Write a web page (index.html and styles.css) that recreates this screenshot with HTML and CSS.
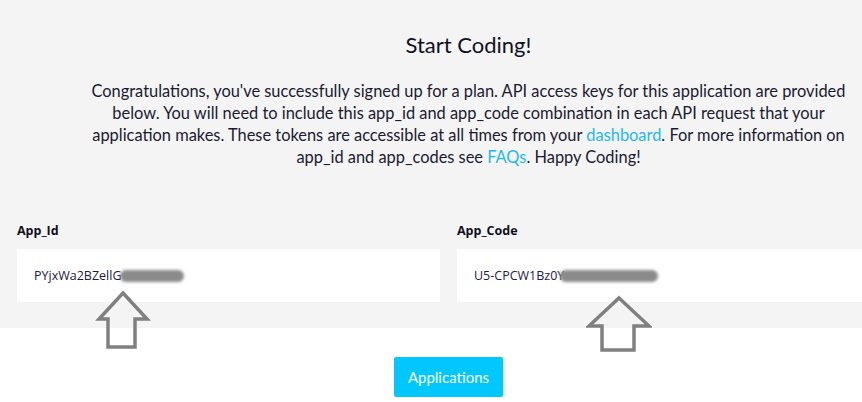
FILE: index.html
```html
<!DOCTYPE html>
<html>
<head>
<meta charset="utf-8">
<link rel="stylesheet" href="styles.css">
</head>
<body>
<div class="page">
  <section class="hero">
    <h1 class="title">Start Coding!</h1>
    <p class="intro">Congratulations, you've successfully signed up for a plan. API access keys for this application are provided below. You will need to include this app_id and app_code combination in each API request that your application makes. These tokens are accessible at all times from your <a class="link" href="#">dashboard</a>. For more information on app_id and app_codes see <a class="link" href="#">FAQs</a>. Happy Coding!</p>
    <div class="keys">
      <div class="key">
        <div class="key-label">App_Id</div>
        <div class="key-box"><span class="key-text">PYjxWa2BZellG</span><span class="smudge smudge-a"></span></div>
      </div>
      <div class="key">
        <div class="key-label">App_Code</div>
        <div class="key-box"><span class="key-text">U5-CPCW1Bz0Y</span><span class="smudge smudge-b"></span></div>
      </div>
    </div>
  </section>
  <div class="actions">
    <button class="btn">Applications</button>
  </div>
  <svg class="arrow arrow-left" width="56" height="62" viewBox="0 0 56 62">
    <path d="M28 3 L52 29 L40 29 L40 57 L13 57 L13 29 L4 29 Z" fill="none" stroke="#808080" stroke-width="3.5" stroke-linejoin="miter"/>
  </svg>
  <svg class="arrow arrow-right" width="66" height="60" viewBox="0 0 66 60">
    <path d="M33 3 L63 31 L48 31 L48 55 L16 55 L16 31 L3 31 Z" fill="none" stroke="#808080" stroke-width="3.5" stroke-linejoin="miter"/>
  </svg>
</div>
</body>
</html>
```

FILE: styles.css
```css
* { box-sizing: border-box; }
html, body { margin: 0; padding: 0; background: #ffffff; }
body { width: 862px; height: 402px; overflow: hidden; }
.page { position: relative; width: 862px; height: 402px; }
.hero {
  background: #f4f4f4;
  height: 328px;
  padding-top: 30px;
  overflow: hidden;
}
.title {
  margin: 0 0 0 89px;
  width: 759px;
  text-align: center;
  font-family: Lato, "Open Sans", sans-serif;
  font-weight: 400;
  font-size: 22px;
  line-height: 30px;
  color: #101025;
}
.intro {
  margin: 20px 0 0 86px;
  width: 765px;
  text-align: center;
  font-family: Lato, "Open Sans", sans-serif;
  font-size: 16.4px;
  line-height: 22px;
  color: #1a1a33;
}
.link { color: #1fb8ef; text-decoration: none; }
.keys {
  display: grid;
  grid-template-columns: 423px 423px;
  column-gap: 17px;
  margin: 54px 0 0 17px;
}
.key-label {
  font-family: "Open Sans", "Noto Sans", sans-serif;
  font-weight: 700;
  font-size: 12.5px;
  line-height: 18px;
  color: #0f1020;
  margin-bottom: 9px;
}
.key-box {
  background: #ffffff;
  height: 53px;
  padding-left: 17px;
  display: flex;
  align-items: center;
  font-family: "Open Sans", "Noto Sans", sans-serif;
  font-size: 12.5px;
  color: #1d2040;
}
.smudge {
  display: inline-block;
  height: 12px;
  background: #8a8a8a;
  border-radius: 6px;
  filter: blur(1.5px);
  margin-left: -2px;
}
.smudge-a { width: 64px; }
.smudge-b { width: 98px; margin-left: -4px; }
.actions {
  display: flex;
  padding: 29px 0 0 394px;
}
.btn {
  width: 109px;
  height: 40px;
  border: 0;
  border-radius: 2px;
  background: #00c8ff;
  color: #ffffff;
  font-family: Lato, "Open Sans", sans-serif;
  font-size: 15px;
  padding: 0;
}
.arrow { position: absolute; }
.arrow-left { left: 95px; top: 290px; }
.arrow-right { left: 586px; top: 295px; }
```
